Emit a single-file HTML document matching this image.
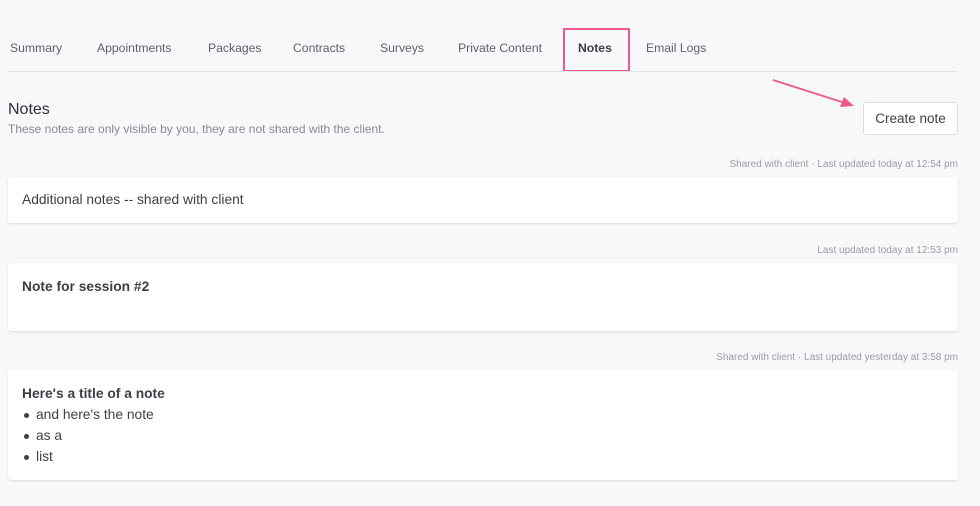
<!DOCTYPE html>
<html><head><meta charset="utf-8"><style>
*{box-sizing:border-box;margin:0;padding:0}
body{width:980px;height:506px;background:#f7f8fa;font-family:"Liberation Sans",sans-serif;color:#3c3f47;position:relative;overflow:hidden}
.tab{position:absolute;top:41px;font-size:12.2px;color:#5d616b}
.line{position:absolute;left:8px;top:71px;width:950px;height:1px;background:#e2e4e8}
.hl{position:absolute;left:563px;top:28px;width:67px;height:44px;border:2px solid #f0588a;border-radius:1px}
.card{position:absolute;left:8px;width:950px;background:#fff;border-radius:3px;box-shadow:0 1px 2px rgba(0,0,0,.12);font-size:13.8px;color:#3c3f47}
.meta{position:absolute;right:22px;font-size:10px;color:#9a9da5}
.btn{position:absolute;left:863px;top:102px;width:95px;height:33px;background:#fff;border:1px solid #dcdee2;border-radius:3px;font-size:13.5px;text-align:center;line-height:31px;color:#3c3f47}
li{list-style:none;position:relative;padding-left:14px;line-height:21px}
li:before{content:"";position:absolute;left:2px;top:9px;width:5px;height:5px;border-radius:50%;background:#3c3f47}
</style></head><body>
<div class="tab" style="left:10px">Summary</div>
<div class="tab" style="left:97px">Appointments</div>
<div class="tab" style="left:208px">Packages</div>
<div class="tab" style="left:293px">Contracts</div>
<div class="tab" style="left:380px">Surveys</div>
<div class="tab" style="left:458px">Private Content</div>
<div class="tab" style="left:578px;color:#3c3f47;font-weight:bold">Notes</div>
<div class="tab" style="left:646px">Email Logs</div>
<div class="hl"></div>
<div class="line"></div>
<svg style="position:absolute;left:770px;top:76px" width="90" height="35"><line x1="3" y1="4" x2="75" y2="27" stroke="#f0588a" stroke-width="1.8"/><polygon points="84,30 70,31 74,21" fill="#f0588a"/></svg>
<div style="position:absolute;left:8px;top:101px;font-size:16px;color:#2f323a">Notes</div>
<div style="position:absolute;left:8px;top:122px;font-size:12px;color:#878a93">These notes are only visible by you, they are not shared with the client.</div>
<div class="btn">Create note</div>
<div class="meta" style="top:159px">Shared with client · Last updated today at 12:54 pm</div>
<div class="card" style="top:177px;height:46px;padding:15px 14px">Additional notes -- shared with client</div>
<div class="meta" style="top:245px">Last updated today at 12:53 pm</div>
<div class="card" style="top:263px;height:68px;padding:16px 14px;font-weight:bold">Note for session #2</div>
<div class="meta" style="top:352px">Shared with client · Last updated yesterday at 3:58 pm</div>
<div class="card" style="top:370px;height:110px;padding:14px 14px">
<div style="font-weight:bold;line-height:20px">Here's a title of a note</div>
<ul><li>and here's the note</li><li>as a</li><li>list</li></ul>
</div>
</body></html>
